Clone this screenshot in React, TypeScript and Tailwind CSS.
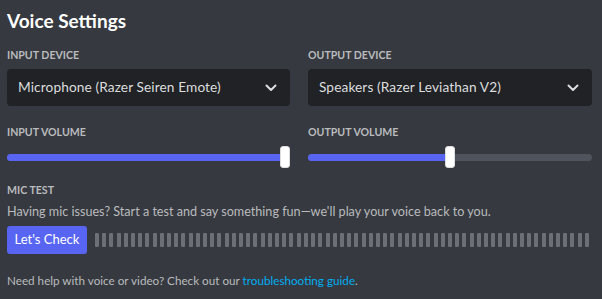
import React from "react";

const font = { fontFamily: "Lato, 'Noto Sans', sans-serif" };

function Chevron() {
  return (
    <svg width="12" height="8" viewBox="0 0 12 8" fill="none">
      <path d="M1.5 1.5 L6 6 L10.5 1.5" stroke="#dcddde" strokeWidth="2" strokeLinecap="round" strokeLinejoin="round" />
    </svg>
  );
}

function Select({ label }: { label: string }) {
  return (
    <div className="flex h-[37px] items-center justify-between rounded-[4px] bg-[#202225] pl-[11px] pr-[13px]">
      <span className="text-[13.7px] tracking-[0.1px] text-[#dcddde]">{label}</span>
      <Chevron />
    </div>
  );
}

function Slider({ pct }: { pct: number }) {
  return (
    <div className="relative h-[22px]">
      <div className="absolute left-0 right-0 top-[8px] h-[7px] rounded-full bg-[#4f545c]" />
      <div className="absolute left-0 top-[8px] h-[7px] rounded-full bg-[#5865f2]" style={{ width: `${pct}%` }} />
      <div
        className="absolute top-0 h-[22px] w-[10px] rounded-[3px] border border-[#dcddde] bg-white"
        style={{ left: `calc(${pct}% - 5px)` }}
      />
    </div>
  );
}

const label = "text-[10.6px] font-bold uppercase leading-[16px] text-[#b9bbbe]";

export default function App() {
  const bars = Array.from({ length: 69 });
  return (
    <div className="h-[299px] w-[602px] bg-[#36393f] px-[7px] pt-[8px]" style={font}>
      <h1 className="text-[19px] font-bold leading-[26px] text-white">Voice Settings</h1>
      <div className="mt-[13px] flex gap-[18px]">
        <div className="w-[283px]">
          <div className={label}>Input Device</div>
          <div className="mt-[6px]">
            <Select label="Microphone (Razer Seiren Emote)" />
          </div>
        </div>
        <div className="w-[284px]">
          <div className={label}>Output Device</div>
          <div className="mt-[6px]">
            <Select label="Speakers (Razer Leviathan V2)" />
          </div>
        </div>
      </div>
      <div className="mt-[18px] flex gap-[18px]">
        <div className="w-[283px]">
          <div className={label}>Input Volume</div>
          <div className="mt-[6px] pr-[2px]">
            <Slider pct={99} />
          </div>
        </div>
        <div className="w-[284px]">
          <div className={label}>Output Volume</div>
          <div className="mt-[6px]">
            <Slider pct={50} />
          </div>
        </div>
      </div>
      <div className="mt-[14px] text-[10.6px] font-bold uppercase leading-[16px] text-[#b9bbbe]">Mic Test</div>
      <div className="mt-[5px] text-[12.6px] leading-[18px] text-[#b9bbbe]">
        Having mic issues? Start a test and say something fun—we'll play your voice back to you.
      </div>
      <div className="mt-[5px] flex items-center">
        <button className="h-[28px] w-[80px] rounded-[3px] bg-[#5865f2] text-[13px] text-white">Let's Check</button>
        <div className="ml-[8px] flex w-[494px] justify-between">
          {bars.map((_, i) => (
            <div key={i} className="h-[14px] w-[4px] rounded-[1px] bg-[#6c6f75]" />
          ))}
        </div>
      </div>
      <div className="mt-[18px] text-[11.7px] leading-[16px] text-[#b9bbbe]">
        Need help with voice or video? Check out our <span className="text-[#00aff4]">troubleshooting guide</span>.
      </div>
    </div>
  );
}
